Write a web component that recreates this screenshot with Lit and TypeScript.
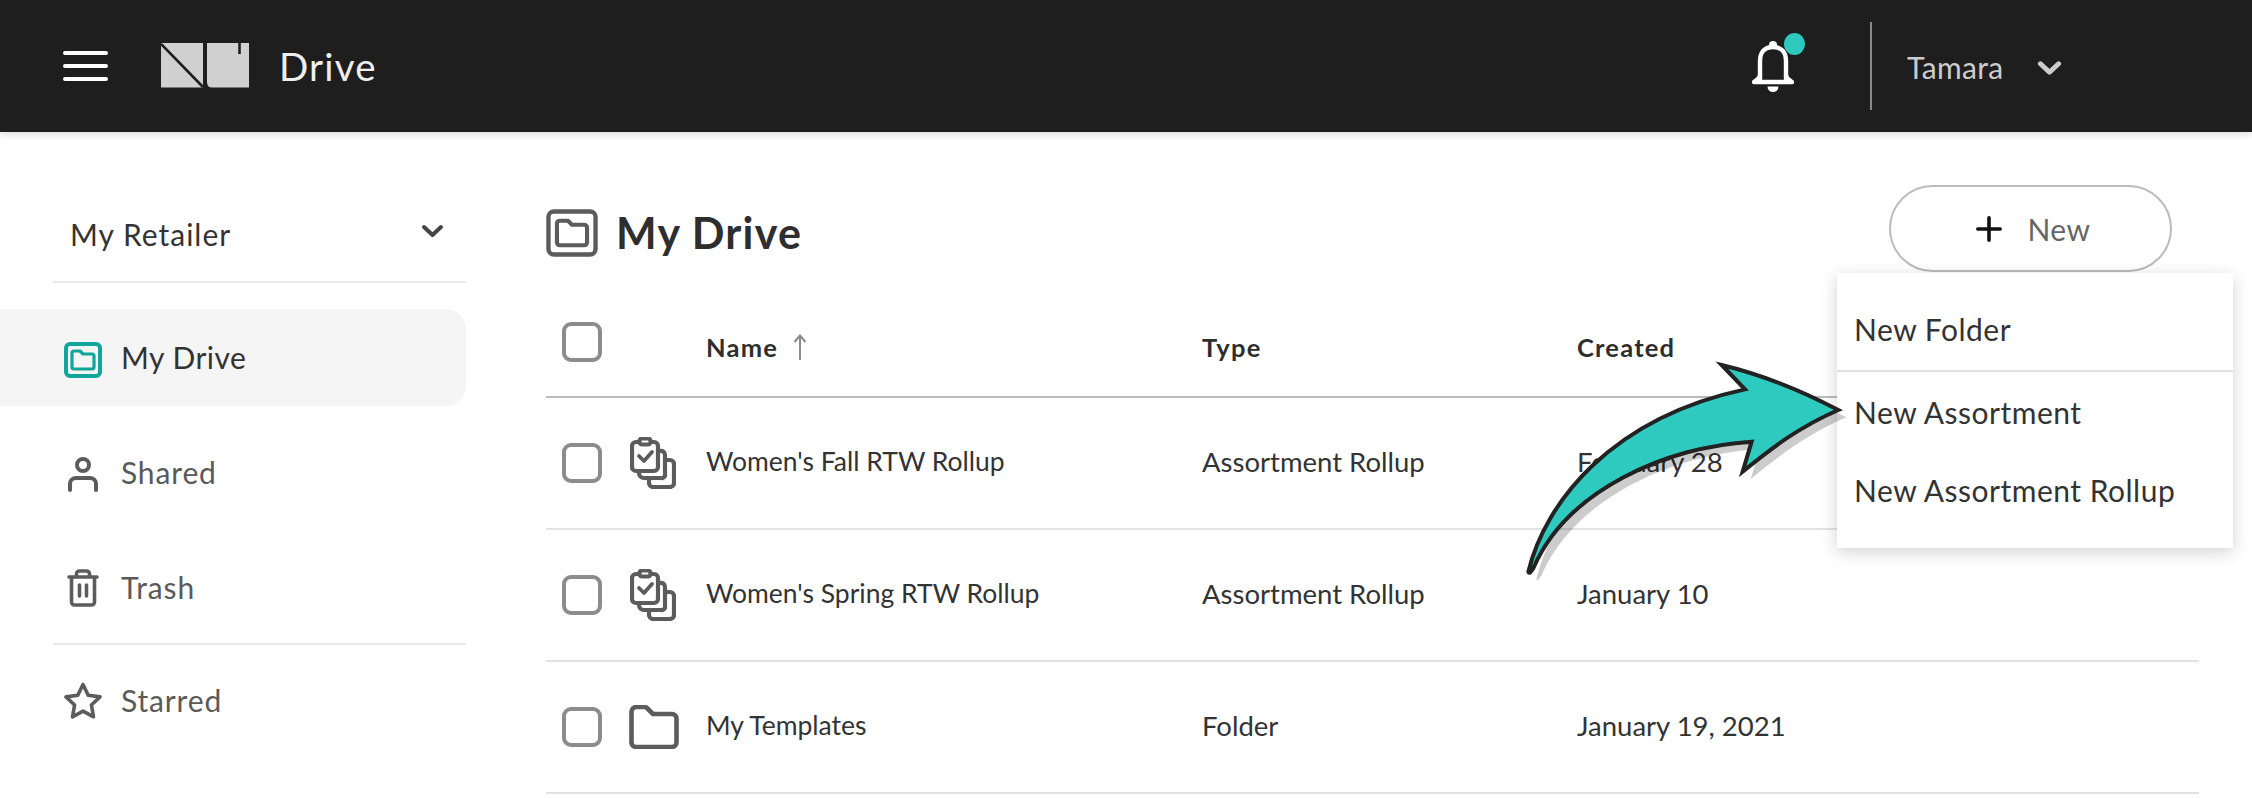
import { LitElement, html, css, svg } from "lit";
import { customElement } from "lit/decorators.js";

const chevron = svg`<path d="M3 3 L11.5 11 L20 3" fill="none" stroke="currentColor" stroke-width="4" stroke-linecap="round" stroke-linejoin="round"/>`;
const chevronBold = svg`<path d="M3 3.5 L11.5 11.5 L20 3.5" fill="none" stroke="currentColor" stroke-width="4.6" stroke-linecap="round" stroke-linejoin="round"/>`;

const folderSquare = (sw: number) => svg`
  <rect x="${sw / 2}" y="${sw / 2}" width="${38 - sw}" height="${36 - sw}" rx="4" fill="none" stroke="currentColor" stroke-width="${sw}"/>
  <path d="M8 11 a2 2 0 0 1 2-2 h6 l3 3 h9 a2 2 0 0 1 2 2 v11 a2 2 0 0 1-2 2 H10 a2 2 0 0 1-2-2z" fill="none" stroke="currentColor" stroke-width="${sw * 0.8}" stroke-linejoin="round"/>`;

const clipboardStack = html`<svg class="rowicon" width="46" height="52" viewBox="0 0 46 52" fill="none" stroke="#5c5c5c" stroke-width="4.2" stroke-linejoin="round" stroke-linecap="round">
  <rect x="2" y="5" width="26" height="29" rx="4"/>
  <rect x="9.5" y="1.5" width="11" height="6" rx="2.5" fill="#fff"/>
  <path d="M9 19 l5 5 l8-9" stroke-width="3.8"/>
  <path d="M29 14 h1 a4 4 0 0 1 5 4 v21 a4 4 0 0 1-4 2 H14 a5 5 0 0 1-5-5 v-2"/>
  <path d="M36 23 h4 a4 4 0 0 1 4 4 v19 a4 4 0 0 1-4 4 H23 a4 4 0 0 1-4-4 v-5"/>
</svg>`;

const folderIcon = html`<svg class="rowicon folder" width="50" height="44" viewBox="0 0 50 44" fill="none" stroke="#5c5c5c" stroke-width="4.6" stroke-linejoin="round">
  <path d="M2.5 38 V7 a5 5 0 0 1 5-5 H15 a4 4 0 0 1 3.5 1.5 L24 9 H43 a4.5 4.5 0 0 1 4.5 4.5 V37.5 a4.5 4.5 0 0 1-4.5 4.5 H7 a4.5 4.5 0 0 1-4.5-4z"/>
</svg>`;

const rows = [
  { name: "Women's Fall RTW Rollup", type: "Assortment Rollup", created: "February 28", icon: clipboardStack },
  { name: "Women's Spring RTW Rollup", type: "Assortment Rollup", created: "January 10", icon: clipboardStack },
  { name: "My Templates", type: "Folder", created: "January 19, 2021", icon: folderIcon },
];

@customElement("app-root")
export class AppRoot extends LitElement {
  static styles = css`
    :host {
      display: block;
      width: 2252px;
      height: 798px;
      overflow: hidden;
      position: relative;
      background: #fff;
      font-family: "Lato", "Liberation Sans", sans-serif;
      color: #333;
    }
    .topbar {
      height: 132px;
      background: #1e1e1e;
      box-shadow: 0 2px 8px rgba(0, 0, 0, 0.16);
      display: flex;
      align-items: center;
      position: relative;
      z-index: 2;
    }
    .burger { margin-left: 63px; display: block; }
    .logo { margin-left: 53px; display: block; margin-top: -1px; }
    .app-name { margin-left: 30px; font-size: 38.5px; letter-spacing: 1.2px; color: #eee; line-height: 1; margin-top: 1px; }
    .bell-wrap { margin-left: auto; position: relative; width: 42px; height: 51px; }
    .bell-wrap svg { display: block; }
    .dot {
      position: absolute;
      left: 32px;
      top: -8px;
      width: 21px;
      height: 22px;
      border-radius: 50%;
      background: #2ec9bf;
    }
    .vline { width: 2px; height: 88px; background: #888; margin-left: 76px; }
    .user { margin-left: 35px; font-size: 30px; letter-spacing: 0.35px; color: #ccc; margin-right: 33px; width: 97px; padding-top: 2px; }
    .user-chev { color: #ccc; margin-right: 190px; display: block; margin-top: 4px; }

    .body { display: flex; align-items: flex-start; }
    .side { width: 466px; flex: none; padding-top: 53px; }
    .select {
      margin-left: 53px;
      height: 98px;
      box-sizing: border-box;
      border-bottom: 2px solid #eaeaea;
      padding: 0 22px 0 17px;
      display: flex;
      align-items: center;
      justify-content: space-between;
      font-size: 30px;
      letter-spacing: 1px;
      color: #333;
    }
    .select span { padding-top: 1px; }
    .select svg { color: #444; margin-top: -4px; }
    .nav { display: flex; flex-direction: column; gap: 18px; margin-top: 26px; }
    .item {
      height: 97px;
      display: flex;
      align-items: center;
      gap: 19px;
      padding-left: 64px;
      font-size: 30px;
      letter-spacing: 0.85px;
      color: #5a5a5a;
      border-radius: 0 20px 20px 0;
    }
    .item span { padding-bottom: 2px; }
    .item.active { background: #f5f5f5; color: #333; letter-spacing: 0.5px; }
    .item.active span { padding-bottom: 1px; }
    .item svg { flex: none; display: block; color: #5c5c5c; }
    .item.active svg { color: #12a59b; margin-top: 4px; }
    .nav-rule { height: 2px; background: #eaeaea; margin-left: 53px; margin-top: 7px; margin-bottom: 7px; }

    .main { margin-left: 80px; width: 1653px; flex: none; padding-top: 53px; }
    .title-row { height: 87px; display: flex; align-items: center; }
    .title-icon { color: #5c5c5c; display: block; margin-top: 9px; }
    .title { font-size: 43px; letter-spacing: 1.2px; font-weight: 700; color: #2e2e2e; margin-left: 18px; margin-top: 8px; line-height: 1; }
    .new-btn {
      margin-left: auto;
      margin-right: 27px;
      width: 283px;
      height: 87px;
      box-sizing: border-box;
      border: 2px solid #bbb;
      border-radius: 44px;
      display: flex;
      align-items: center;
      justify-content: center;
      gap: 25px;
      font-size: 30px;
      letter-spacing: 0.5px;
      color: #666;
      padding-left: 6px;
    }
    .new-btn svg { display: block; }

    .grid-row {
      display: grid;
      grid-template-columns: 160px 496px 375px 1fr;
      align-items: center;
    }
    .thead {
      height: 108px;
      margin-top: 18px;
      box-sizing: border-box;
      border-bottom: 2px solid #bbb;
      font-size: 25.5px;
      letter-spacing: 1.2px;
      font-weight: 700;
      color: #2e2e2e;
    }
    .thead .cell { margin-top: 8px; }
    .name-head { display: flex; align-items: center; gap: 15px; }
    .row {
      height: 132px;
      box-sizing: border-box;
      border-bottom: 2px solid #e2e2e2;
      font-size: 27.5px;
      color: #333;
    }
    .row .cell { margin-top: -3px; }
    .row .name { font-size: 26.5px; margin-top: -4px; }
    .lead { display: flex; align-items: center; padding-left: 16px; }
    .check {
      display: block;
      width: 40px;
      height: 40px;
      box-sizing: border-box;
      border: 4px solid #8c8c8c;
      border-radius: 9px;
      flex: none;
    }
    .thead .check { margin-top: -3px; }
    .rowicon { display: block; margin-left: 28px; flex: none; }
    .rowicon.folder { margin-left: 27px; }

    .menu {
      position: absolute;
      left: 1837px;
      top: 273px;
      width: 396px;
      height: 275px;
      background: #fff;
      box-shadow: 0 4px 16px rgba(0, 0, 0, 0.18);
      font-size: 30px;
      letter-spacing: 0.5px;
      color: #333;
      z-index: 3;
      display: flex;
      flex-direction: column;
    }
    .menu div { padding-left: 17px; display: flex; align-items: center; }
    .m1 { height: 99px; border-bottom: 2px solid #e2e2e2; padding-top: 15px; box-sizing: border-box; }
    .m2 { height: 79px; }
    .m3 { height: 78px; }
    .pointer { position: absolute; left: 1500px; top: 330px; z-index: 4; display: block; overflow: visible; }
  `;

  render() {
    return html`
      <header class="topbar">
        <svg class="burger" width="45" height="30" viewBox="0 0 45 30" fill="none" stroke="#fff" stroke-width="4" stroke-linecap="round">
          <path d="M2 2 H43 M2 15 H43 M2 28 H43"/>
        </svg>
        <svg class="logo" width="88" height="45" viewBox="0 0 88 45">
          <path d="M0 0 H42 V44.5 H0z" fill="#d0d0d0"/>
          <path d="M0 1 L42 44" stroke="#1e1e1e" stroke-width="2.6"/>
          <path d="M46 0 H88 V44.5 H51 Q46 44.5 46 39z" fill="#d0d0d0"/>
          <path d="M78.5 0 V11" stroke="#1e1e1e" stroke-width="2.6"/>
        </svg>
        <div class="app-name">Drive</div>
        <div class="bell-wrap">
          <svg width="42" height="51" viewBox="0 0 42 51" fill="none" stroke="#fff" stroke-width="4.4" stroke-linejoin="round" stroke-linecap="round">
            <path d="M8 38 V20 C8 11 13 6 21 6 C29 6 34 11 34 20 V38"/>
            <path d="M8 34 C8 37 5 39 2 41 H40 C37 39 34 37 34 34"/>
            <circle cx="21" cy="4" r="4" fill="#fff" stroke="none"/>
            <path d="M15.5 45.5 H26.5 A5.5 5.5 0 0 1 15.5 45.5z" fill="#fff" stroke="none"/>
          </svg>
          <span class="dot"></span>
        </div>
        <div class="vline"></div>
        <div class="user">Tamara</div>
        <svg class="user-chev" width="25" height="16" viewBox="0 0 23 15">${chevronBold}</svg>
      </header>

      <div class="body">
        <aside class="side">
          <div class="select">
            <span>My Retailer</span>
            <svg width="23" height="15" viewBox="0 0 23 15">${chevron}</svg>
          </div>
          <nav class="nav">
            <div class="item active">
              <svg width="38" height="36" viewBox="0 0 38 36">${folderSquare(4)}</svg>
              <span>My Drive</span>
            </div>
            <div class="item">
              <svg width="38" height="38" viewBox="0 0 38 38" fill="none" stroke="currentColor" stroke-width="4" stroke-linecap="round">
                <circle cx="19" cy="11" r="6"/>
                <path d="M6 36 V30 a6 6 0 0 1 6-6 H26 a6 6 0 0 1 6 6 V36"/>
              </svg>
              <span>Shared</span>
            </div>
            <div class="item">
              <svg width="38" height="38" viewBox="0 0 38 38" fill="none" stroke="currentColor" stroke-width="3.6" stroke-linecap="round" stroke-linejoin="round">
                <path d="M5 8 H33"/>
                <path d="M12.5 7 V5 a3 3 0 0 1 3-3 H22.5 a3 3 0 0 1 3 3 V7"/>
                <path d="M7.5 9 V33 a3 3 0 0 0 3 3 H27.5 a3 3 0 0 0 3-3 V9"/>
                <path d="M15.5 16 V27 M22.5 16 V27"/>
              </svg>
              <span>Trash</span>
            </div>
          </nav>
          <div class="nav-rule"></div>
          <div class="item">
            <svg width="38" height="38" viewBox="0 0 38 38" fill="none" stroke="currentColor" stroke-width="3.6" stroke-linejoin="round">
              <path d="M19 2.5 L24.2 13.3 L36 14.9 L27.4 23 L29.5 34.8 L19 29.1 L8.5 34.8 L10.6 23 L2 14.9 L13.8 13.3z"/>
            </svg>
            <span>Starred</span>
          </div>
        </aside>

        <main class="main">
          <div class="title-row">
            <svg class="title-icon" width="52" height="48" viewBox="0 0 38 35">
              <rect x="1.8" y="1.8" width="34.4" height="31.4" rx="4" fill="none" stroke="currentColor" stroke-width="3.2"/>
              <path d="M8 10.5 a2 2 0 0 1 2-2 h6 l3 3 h9 a2 2 0 0 1 2 2 v11 a2 2 0 0 1-2 2 H10 a2 2 0 0 1-2-2z" fill="none" stroke="currentColor" stroke-width="3" stroke-linejoin="round"/>
            </svg>
            <div class="title">My Drive</div>
            <div class="new-btn">
              <svg width="26" height="26" viewBox="0 0 26 26" stroke="#111" stroke-width="3.6" stroke-linecap="round"><path d="M13 1.8 V24.2 M1.8 13 H24.2"/></svg>
              <span>New</span>
            </div>
          </div>

          <div class="grid-row thead">
            <div class="lead"><span class="check"></span></div>
            <div class="cell name-head">
              <span>Name</span>
              <svg width="14" height="26" viewBox="0 0 14 26" fill="none" stroke="#8a8a8a" stroke-width="2"><path d="M7 26 V1 M1.5 8 L7 1.5 L12.5 8"/></svg>
            </div>
            <div class="cell">Type</div>
            <div class="cell">Created</div>
          </div>

          ${rows.map(
            (r) => html`<div class="grid-row row">
              <div class="lead"><span class="check"></span>${r.icon}</div>
              <div class="cell name">${r.name}</div>
              <div class="cell">${r.type}</div>
              <div class="cell">${r.created}</div>
            </div>`
          )}
        </main>
      </div>

      <div class="menu">
        <div class="m1">New Folder</div>
        <div class="m2">New Assortment</div>
        <div class="m3">New Assortment Rollup</div>
      </div>

      <svg class="pointer" width="400" height="260" viewBox="0 0 1200 780">
        <path transform="translate(24 22)" d="M85 725 C135 520 330 265 735 178 L665 105 C790 135 900 180 1015 240 C900 290 820 350 728 425 L755 335 C500 350 200 480 100 715 Q88 735 85 725Z" fill="rgba(0,0,0,0.2)"/>
        <path d="M85 725 C135 520 330 265 735 178 L665 105 C790 135 900 180 1015 240 C900 290 820 350 728 425 L755 335 C500 350 200 480 100 715 Q88 735 85 725Z" fill="#2ec9bf" stroke="#222" stroke-width="12" stroke-linejoin="miter"/>
      </svg>
    `;
  }
}
